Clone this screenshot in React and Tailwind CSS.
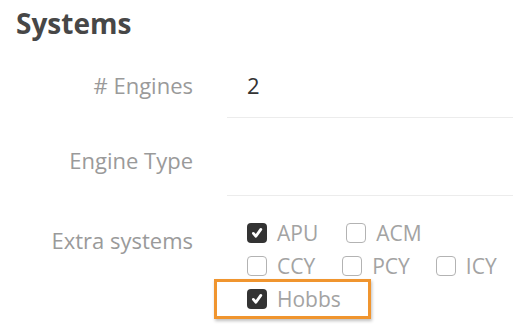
import React from "react";

function Check({ checked }) {
  if (checked) {
    return (
      <span className="flex h-[20px] w-[20px] shrink-0 items-center justify-center rounded-[4px] bg-[#333333]">
        <svg width="12" height="12" viewBox="0 0 12 12">
          <path d="M2.4 6.4 L4.9 9.2 L9.8 2.4" fill="none" stroke="#ffffff" strokeWidth="2.8" strokeLinecap="round" strokeLinejoin="round" />
        </svg>
      </span>
    );
  }
  return <span className="block h-[20px] w-[20px] shrink-0 rounded-[4px] border-[1.5px] border-[#b3b3b3] bg-white" />;
}

function Item({ label, checked, className = "" }) {
  return (
    <label className={"flex items-center gap-[10px] " + className}>
      <Check checked={checked} />
      <span className="text-[21px] leading-[26px] text-[#a3a3a3]">{label}</span>
    </label>
  );
}

export default function App() {
  return (
    <div className="h-[328px] w-[525px] overflow-hidden bg-white" style={{ fontFamily: '"Open Sans", sans-serif' }}>
      <h1 className="h-[44px] pl-[16px] pt-[3px] text-[28px] font-bold leading-[40px] text-[#474747]">Systems</h1>

      <div className="flex h-[74px]">
        <div className="w-[193px] shrink-0 pt-[26px] text-right text-[22px] leading-[30px] text-[#9a9a9a]">
          # Engines
        </div>
        <div className="ml-[34px] mr-[12px] flex-1 border-b-[1.5px] border-[#ececec] pl-[20px] pt-[26px] text-[22px] leading-[30px] text-[#333333]">
          2
        </div>
      </div>

      <div className="flex h-[78px]">
        <div className="w-[193px] shrink-0 pt-[27px] text-right text-[22px] leading-[30px] text-[#9a9a9a]">
          Engine Type
        </div>
        <div className="ml-[34px] mr-[12px] flex-1 border-b-[1.5px] border-[#ececec]" />
      </div>

      <div className="flex pt-[20px]">
        <div className="w-[193px] shrink-0 pt-[9px] text-right text-[22px] leading-[30px] text-[#9a9a9a]">
          Extra systems
        </div>
        <div className="ml-[54px] flex flex-col">
          <div className="flex h-[33px] items-center">
            <Item label="APU" checked className="mr-[28px]" />
            <Item label="ACM" />
          </div>
          <div className="flex h-[33px] items-center">
            <Item label="CCY" className="mr-[27px]" />
            <Item label="PCY" className="mr-[26px]" />
            <Item label="ICY" />
          </div>
          <div className="flex">
            <div className="ml-[-33px] mt-[-3px] flex h-[40px] items-center border-[3px] border-[#f0952f] pl-[30px] pr-[27px] shadow-[1px_2px_3px_rgba(0,0,0,0.25)]">
              <Item label="Hobbs" checked />
            </div>
          </div>
        </div>
      </div>
    </div>
  );
}
